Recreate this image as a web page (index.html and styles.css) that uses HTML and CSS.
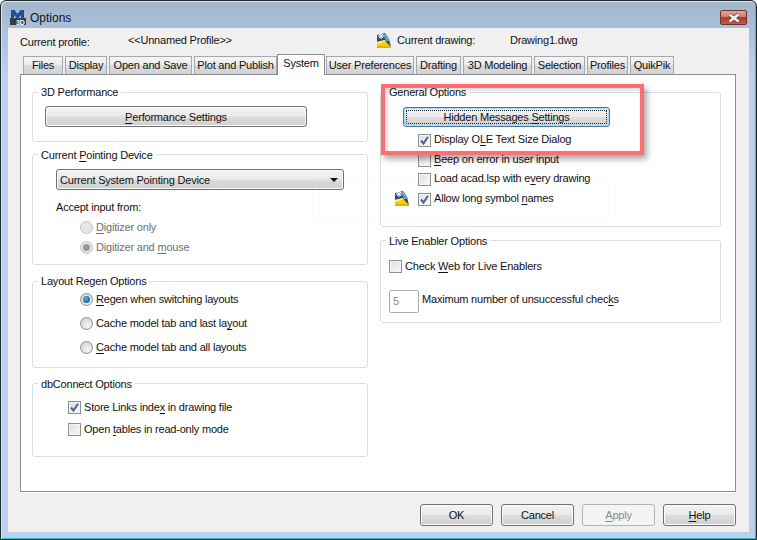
FILE: index.html
```html
<!DOCTYPE html>
<html lang="en">
<head>
<meta charset="utf-8">
<title>Options</title>
<link rel="stylesheet" href="styles.css">
</head>
<body>
<svg class="defs" width="0" height="0" aria-hidden="true">
  <symbol id="drawing" viewBox="0 0 16 17">
    <polygon points="1,3 9,1 13,7 15,15 1,15" fill="#27507f"/>
    <polygon points="7,2 10,2 14,9 10,9" fill="#6f9cc4"/>
    <polygon points="1,10 9,8 11,11 15,15 15,16 1,16" fill="#f5d000"/>
    <polygon points="1,14 15,14 15,16 1,16" fill="#e5b000"/>
    <polygon points="1,10 9,8 9,9 2,12" fill="#fff27a"/>
    <path d="M5 1v6M2 4h6M3 2l4 4M7 2L3 6" stroke="#fff" stroke-width="1" fill="none"/>
  </symbol>
  <symbol id="tick" viewBox="0 0 13 13">
    <path d="M3 6.500l2.500 3L10 2.800" stroke="#4a5f9c" stroke-width="2" fill="none"/>
  </symbol>
</svg>
<div class="window">
  <div class="titlebar">
    <svg class="app-icon" width="16" height="15" viewBox="0 0 16 15" aria-hidden="true">
      <rect x="0" y="8" width="16" height="7" fill="#3a3a3e"/>
      <path d="M1 9V0h3.500l3 4 3-4H14v9h-3V5L8 8.500H7L4 5v4z" fill="#1f4f9a"/>
      <text x="6" y="14.500" class="app-icon-text">3D</text>
    </svg>
    <span class="title">Options</span>
    <button class="close" aria-label="Close">
      <svg width="14" height="10" viewBox="0 0 14 10" aria-hidden="true">
        <path d="M2.500 1.500l9 7M11.500 1.500l-9 7" stroke="#5b3a3a" stroke-width="4"/>
        <path d="M2.500 1.500l9 7M11.500 1.500l-9 7" stroke="#f4f1f1" stroke-width="2.600"/>
      </svg>
    </button>
  </div>
  <div class="client">
    <div class="info">
      <span class="profile-label">Current profile:</span>
      <span class="profile-name">&lt;&lt;Unnamed Profile&gt;&gt;</span>
      <svg class="info-icon" width="16" height="17" aria-hidden="true"><use href="#drawing"/></svg>
      <span class="drawing-label">Current drawing:</span>
      <span>Drawing1.dwg</span>
    </div>
    <div class="tabs">
      <div class="tab w-files">Files</div>
      <div class="tab w-display">Display</div>
      <div class="tab w-open">Open and Save</div>
      <div class="tab w-plot">Plot and Publish</div>
      <div class="tab active w-system">System</div>
      <div class="tab w-user">User Preferences</div>
      <div class="tab w-drafting">Drafting</div>
      <div class="tab w-model">3D Modeling</div>
      <div class="tab w-selection">Selection</div>
      <div class="tab w-profiles">Profiles</div>
      <div class="tab w-quik">QuikPik</div>
    </div>
    <div class="pane">
      <div class="col col-left">
        <section class="group g-perf">
          <div class="legend">3D Performance</div>
          <button class="btn perf-btn"><u>P</u>erformance Settings</button>
        </section>
        <section class="group g-point">
          <div class="legend">Current <u>P</u>ointing Device</div>
          <div class="combo"><span>Current System Pointing Device</span><span class="arrow"></span></div>
          <div class="row accept">Accept input from:</div>
          <div class="row in-radio disabled m4"><span class="rb"></span><span><u>D</u>igitizer only</span></div>
          <div class="row in-radio disabled m4"><span class="rb on"></span><span>Digitizer and <u>m</u>ouse</span></div>
        </section>
        <section class="group g-layout">
          <div class="legend">Layout Regen Options</div>
          <div class="row in-radio m1"><span class="rb on blue"></span><span><u>R</u>egen when switching layouts</span></div>
          <div class="row in-radio m8"><span class="rb"></span><span>Cache model tab and last la<u>y</u>out</span></div>
          <div class="row in-radio m8"><span class="rb"></span><span><u>C</u>ache model tab and all layouts</span></div>
        </section>
        <section class="group g-db">
          <div class="legend">dbConnect Options</div>
          <div class="row in-db m7"><span class="cb"><svg width="13" height="13"><use href="#tick"/></svg></span><span>Store Links inde<u>x</u> in drawing file</span></div>
          <div class="row in-db m6"><span class="cb"></span><span>Open <u>t</u>ables in read-only mode</span></div>
        </section>
      </div>
      <div class="col col-right">
        <section class="group g-general">
          <div class="legend">General Options</div>
          <button class="btn hidden-btn"><span class="focus">Hidden Messages <u>S</u>ettings</span></button>
          <div class="row in-gen m5"><span class="cb"><svg width="13" height="13"><use href="#tick"/></svg></span><span>Display O<u>L</u>E Text Size Dialog</span></div>
          <div class="row in-gen m4"><span class="cb"></span><span><u>B</u>eep on error in user input</span></div>
          <div class="row in-gen m3"><span class="cb"></span><span>Load acad.lsp with e<u>v</u>ery drawing</span></div>
          <div class="row in-gen-icon m4">
            <svg class="row-icon" width="16" height="17" aria-hidden="true"><use href="#drawing"/></svg>
            <span class="cb"><svg width="13" height="13"><use href="#tick"/></svg></span><span>Allow long symbol <u>n</u>ames</span>
          </div>
        </section>
        <section class="group g-live">
          <div class="legend">Live Enabler Options</div>
          <div class="row in-live m9"><span class="cb"></span><span>Check <u>W</u>eb for Live Enablers</span></div>
          <div class="row in-live spin-row"><span class="spin">5</span><span>Maximum number of unsuccessful chec<u>k</u>s</span></div>
        </section>
      </div>
    </div>
    <div class="footer">
      <button class="btn action">OK</button>
      <button class="btn action">Cancel</button>
      <button class="btn action off"><u>A</u>pply</button>
      <button class="btn action"><u>H</u>elp</button>
    </div>
  </div>
  <div class="ghost"><span>Displays a list</span><span>drivers.</span></div>
  <div class="highlight"></div>
</div>
</body>
</html>
```
FILE: styles.css
```css
* { box-sizing: border-box; }
html, body { margin: 0; padding: 0; background: #fff; }
body {
  width: 757px;
  height: 540px;
  overflow: hidden;
  font-family: "Liberation Sans", Arial, sans-serif;
  font-size: 11px;
  letter-spacing: -0.2px;
  line-height: 16px;
  color: #111;
}
.defs { position: absolute; }
u { text-underline-offset: 2px; text-decoration-thickness: 1px; }

.window {
  position: relative;
  width: 757px;
  height: 540px;
  display: flex;
  flex-direction: column;
  border: 1px solid #20272c;
  border-radius: 6px 6px 0 0;
  background: linear-gradient(180deg, #a3b5c9 0, #a9c1da 30px, #b9d1ea 70px);
  box-shadow: inset 1px 1px 0 #dfe8f0, inset -1px -1px 0 #29c3d6;
}
.titlebar {
  height: 27px;
  flex: none;
  display: flex;
  align-items: flex-start;
  padding: 9px 0 0 9px;
}
.app-icon { flex: none; }
.app-icon-text { font-family: "Liberation Sans", sans-serif; font-size: 7px; font-weight: 700; fill: #fff; }
.title { margin: 0 0 0 4px; font-size: 12px; letter-spacing: 0; color: #10131c; }
.close {
  margin-left: auto;
  margin-right: 9px;
  width: 27px;
  height: 15px;
  padding: 0;
  display: flex;
  align-items: center;
  justify-content: center;
  border: 1px solid #6e3232;
  border-radius: 2px;
  background: linear-gradient(180deg, #dda59c 0, #cf7f72 45%, #b23c2c 50%, #c65b48 100%);
}

.client {
  flex: 1;
  margin: 0 7px 7px 7px;
  background: #f0f0f0;
  display: flex;
  flex-direction: column;
}
.info {
  height: 26px;
  flex: none;
  display: flex;
  align-items: center;
  padding: 0 0 0 12px;
}
.info > span { position: relative; top: -1px; }
.info > .profile-label { top: 1px; width: 108px; }
.profile-name { width: 248px; }
.info-icon { flex: none; margin: -1px 5px 0 0; }
.drawing-label { width: 113px; }

.tabs {
  height: 21px;
  flex: none;
  display: flex;
  align-items: flex-end;
  gap: 2px;
  padding-left: 15px;
  margin-bottom: -1px;
  position: relative;
  z-index: 1;
}
.tab {
  height: 18px;
  margin-bottom: 1px;
  border: 1px solid #a5a9ae;
  border-bottom: 0;
  background: linear-gradient(180deg, #f5f5f5 0, #ececec 45%, #dcdcdc 50%, #d2d2d2 100%);
  text-align: center;
  line-height: 17px;
  white-space: nowrap;
}
.tab.active {
  height: 21px;
  margin: 0 -1px 0 -2px;
  border-color: #898c95;
  background: #fff;
  line-height: 17px;
}
.w-files { width: 40px; }
.w-display { width: 42px; }
.w-open { width: 83px; }
.w-plot { width: 83px; }
.w-system { width: 48px; }
.w-user { width: 88px; }
.w-drafting { width: 45px; }
.w-model { width: 69px; }
.w-selection { width: 51px; }
.w-profiles { width: 41px; }
.w-quik { width: 44px; }

.pane {
  width: 716px;
  height: 418px;
  flex: none;
  margin-left: 12px;
  border: 1px solid #898c95;
  background: #fff;
  box-shadow: 0 1px 0 #fff;
  display: flex;
  gap: 12px;
  padding: 17px 0 0 11px;
}
.col { display: flex; flex-direction: column; }
.col-left { width: 336px; }
.col-right { width: 341px; }

.group { border: 1px solid #d5dfe5; border-radius: 3px; }
.legend {
  width: fit-content;
  margin: -8px 0 0 5px;
  padding: 0 3px;
  background: #fff;
  white-space: nowrap;
  position: relative;
  top: -1px;
}
.g-point .legend, .g-db .legend, .g-live .legend { top: 0; }
.g-perf { height: 50px; margin-bottom: 12px; }
.g-point { height: 111px; margin-bottom: 16px; }
.g-layout { height: 87px; margin-bottom: 15px; }
.g-db { height: 74px; }
.g-general { height: 135px; margin-bottom: 13px; }
.g-live { height: 83px; }

.btn {
  font: inherit;
  letter-spacing: inherit;
  color: inherit;
  display: block;
  padding: 0;
  border: 1px solid #707070;
  border-radius: 3px;
  background: linear-gradient(180deg, #f2f2f2 0, #ebebeb 48%, #dddddd 52%, #cfcfcf 100%);
  box-shadow: inset 0 0 0 1px #fcfcfc;
}
.perf-btn { width: 262px; height: 21px; margin: 5px 0 0 12px; }
.hidden-btn {
  width: 207px;
  height: 20px;
  margin: 6px 0 0 22px;
  border-color: #3c7fb1;
  box-shadow: inset 0 0 0 1px #a9dcf3;
  padding: 2px;
}
.focus {
  display: block;
  height: 14px;
  line-height: 14px;
  outline: 1px dotted #222;
  outline-offset: -1px;
}
.combo {
  width: 288px;
  height: 21px;
  margin: 6px 0 0 23px;
  padding: 0 5px 0 3px;
  display: flex;
  align-items: center;
  justify-content: space-between;
  border: 1px solid #707070;
  border-radius: 3px;
  background: linear-gradient(180deg, #f2f2f2 0, #ebebeb 48%, #dddddd 52%, #cfcfcf 100%);
  box-shadow: inset 0 0 0 1px #fcfcfc;
}
.arrow {
  width: 0;
  height: 0;
  border: 4px solid transparent;
  border-top: 4px solid #111;
  border-bottom: 0;
}

.row { height: 16px; display: flex; align-items: center; white-space: nowrap; }
.m1 { margin-top: 1px; }
.m3 { margin-top: 3px; }
.m4 { margin-top: 4px; }
.m5 { margin-top: 5px; }
.m6 { margin-top: 6px; }
.m7 { margin-top: 7px; }
.m8 { margin-top: 8px; }
.m9 { margin-top: 9px; }
.accept { margin: 9px 0 0 23px; }
.in-radio { margin-left: 47px; gap: 3px; }
.in-db { margin-left: 35px; gap: 3px; }
.in-gen { margin-left: 37px; gap: 3px; }
.in-gen-icon { margin-left: 13px; gap: 3px; }
.in-gen > span:last-child, .in-gen-icon > span:last-child { padding-bottom: 2px; }
.row-icon { flex: none; margin: -1px 5px 0 0; }
.in-live { margin-left: 8px; gap: 3px; }
.spin-row { margin-top: 19px; }
.spin-row > span:last-child { padding-bottom: 4px; }
.spin {
  width: 30px;
  height: 23px;
  flex: none;
  padding: 2px 0 0 3px;
  border: 1px solid #abadb3;
  border-radius: 2px;
  color: #8a8a8a;
  background: #fff;
}
.disabled { color: #707070; }

.cb {
  width: 13px;
  height: 13px;
  flex: none;
  display: block;
  border: 1px solid #8e8f8f;
  background: linear-gradient(135deg, #dcdcdc 0, #f0f0f0 60%, #fbfbfb 100%);
  box-shadow: inset 0 0 0 1px #f4f4f4;
  position: relative;
}
.cb svg { position: absolute; left: -1px; top: -1px; }
.rb {
  width: 13px;
  height: 13px;
  flex: none;
  display: flex;
  align-items: center;
  justify-content: center;
  border: 1px solid #8e8f8f;
  border-radius: 50%;
  background: radial-gradient(circle at 65% 70%, #f6f6f6 0, #d9d9d9 70%);
}
.disabled .rb { border-color: #c2c2c2; background: #e6e6e6; }
.rb.on::after {
  content: "";
  width: 7px;
  height: 7px;
  border-radius: 50%;
  background: #9a9a9a;
}
.rb.blue::after { background: radial-gradient(circle at 40% 35%, #5cb6e8, #0d5f9e 75%); }

.footer {
  margin-top: 12px;
  height: 22px;
  flex: none;
  display: flex;
  justify-content: flex-end;
  gap: 8px;
  padding-right: 13px;
}
.action { width: 73px; height: 22px; }
.action.off {
  border-color: #b5b5b5;
  color: #8a8a8a;
  background: #f4f4f4;
  box-shadow: none;
}

.ghost {
  position: absolute;
  left: 311px;
  top: 182px;
  width: 297px;
  height: 34px;
  padding: 8px 7px 0 8px;
  display: flex;
  justify-content: space-between;
  border: 1px solid rgba(0, 0, 0, 0.02);
  color: rgba(0, 0, 0, 0.03);
  white-space: nowrap;
  pointer-events: none;
}
.highlight {
  position: absolute;
  left: 380px;
  top: 83px;
  width: 263px;
  height: 71px;
  border: 4px solid #fb6f72;
  box-shadow: 3px 4px 6px rgba(0, 0, 0, 0.35), inset 2px 2px 4px rgba(0, 0, 0, 0.18);
  pointer-events: none;
}
```
